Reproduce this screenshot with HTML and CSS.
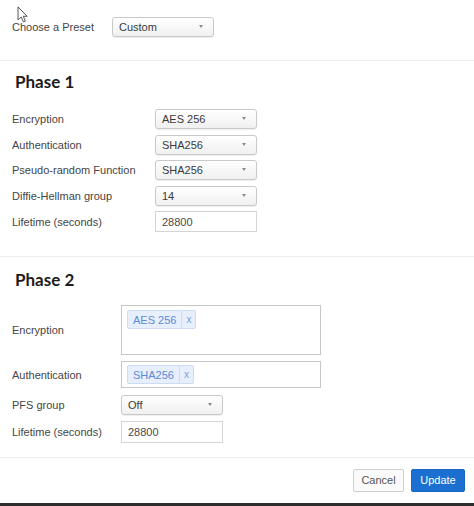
FILE: index.html
```html
<!DOCTYPE html>
<html>
<head>
<meta charset="utf-8">
<link rel="stylesheet" href="styles.css">
</head>
<body>
<div class="page">
  <div class="preset">
    <span class="label">Choose a Preset</span>
    <div class="select sel-preset"><span>Custom</span><i class="arrow"></i></div>
  </div>
  <div class="divider d1"></div>

  <section class="phase">
    <h2 class="title t1">Phase 1</h2>
    <div class="form form1">
      <span class="label">Encryption</span>
      <div class="select"><span>AES 256</span><i class="arrow"></i></div>
      <span class="label">Authentication</span>
      <div class="select"><span>SHA256</span><i class="arrow"></i></div>
      <span class="label">Pseudo-random Function</span>
      <div class="select"><span>SHA256</span><i class="arrow"></i></div>
      <span class="label">Diffie-Hellman group</span>
      <div class="select"><span>14</span><i class="arrow"></i></div>
      <span class="label">Lifetime (seconds)</span>
      <div class="input">28800</div>
    </div>
  </section>
  <div class="divider d2"></div>

  <section class="phase">
    <h2 class="title t2">Phase 2</h2>
    <div class="form form2">
      <span class="label">Encryption</span>
      <div class="multi tall"><span class="tag"><span class="tag-text">AES 256</span><span class="tag-x">x</span></span></div>
      <span class="label">Authentication</span>
      <div class="multi short"><span class="tag"><span class="tag-text">SHA256</span><span class="tag-x">x</span></span></div>
      <span class="label">PFS group</span>
      <div class="select"><span>Off</span><i class="arrow"></i></div>
      <span class="label">Lifetime (seconds)</span>
      <div class="input">28800</div>
    </div>
  </section>
  <div class="divider d3"></div>

  <div class="footer">
    <button class="btn btn-cancel">Cancel</button>
    <button class="btn btn-update">Update</button>
  </div>
  <div class="bottom-bar"></div>

  <svg class="cursor" width="11" height="17" viewBox="0 0 12 19">
    <path d="M1 1 L1 15.5 L4.6 12.3 L7 17.8 L9.2 16.9 L6.9 11.5 L11.2 11.5 Z" fill="#fff" stroke="#444" stroke-width="1" stroke-linejoin="round"/>
  </svg>
</div>
</body>
</html>
```

FILE: styles.css
```css
* { box-sizing: border-box; }
html, body { margin: 0; padding: 0; background: #fff; }
body {
  font-family: "Liberation Sans", Arial, sans-serif;
  font-size: 11px;
  color: #3b3b3b;
}
.page {
  position: relative;
  width: 474px;
  height: 506px;
  overflow: hidden;
}
.label { color: #454545; white-space: nowrap; }

.preset {
  display: grid;
  grid-template-columns: 100px 102px;
  align-items: center;
  padding: 17px 0 0 12px;
}
.select {
  height: 20px;
  border: 1px solid #c9c9c9;
  border-radius: 3px;
  background: linear-gradient(#ffffff, #f0f0f0);
  box-shadow: 0 1px 1px rgba(0,0,0,0.07);
  display: flex;
  align-items: center;
  justify-content: space-between;
  padding: 0 10px 0 6px;
  color: #3a3a3a;
}
.arrow {
  width: 0; height: 0;
  border-left: 2.5px solid transparent;
  border-right: 2.5px solid transparent;
  border-top: 3.5px solid #8a8a8a;
  margin-top: -1px;
}
.input {
  height: 21px;
  border: 1px solid #d4d4d4;
  background: #fff;
  display: flex;
  align-items: center;
  padding: 0 6px;
  color: #4a4a4a;
}
.divider { height: 1px; background: #ededed; }
.d1 { margin-top: 23px; }
.d2 { margin-top: 24px; }
.d3 { margin-top: 14px; }

.title {
  margin: 0;
  padding-left: 15px;
  font-family: Lato, "Liberation Sans", sans-serif;
  font-weight: 700;
  font-size: 17px;
  line-height: 20px;
  color: #1c1c1c;
}
.t1 { margin-top: 11px; margin-bottom: 17px; }
.t2 { margin-top: 13px; margin-bottom: 15px; }

.form {
  display: grid;
  align-items: center;
  padding-left: 12px;
}
.form1 {
  grid-template-columns: 143px 102px;
  row-gap: 5.5px;
}
.form2 {
  grid-template-columns: 109px auto;
  grid-template-rows: 50px 27px 20px 22px;
  row-gap: 6.3px;
  justify-items: start;
}
.form2 .select, .form2 .input { width: 102px; }
.form2 .input { height: 22px; }

.multi {
  width: 200px;
  border: 1px solid #c6c6c6;
  background: #fff;
  padding: 4px 5px;
  display: flex;
  align-items: flex-start;
}
.tall { height: 50px; }
.short { height: 27px; padding-top: 3px; }
.tag {
  display: inline-flex;
  height: 19px;
  align-items: stretch;
  background: #e7effc;
  border: 1px solid #cddcf3;
  border-radius: 2px;
  color: #5d8bd8;
  font-size: 11px;
}
.tag-text { display: flex; align-items: center; padding: 0 5px 0 5px; }
.tag-x {
  display: flex; align-items: center;
  padding: 0 4px;
  border-left: 1px solid #cddcf3;
  font-size: 10px;
  color: #7a9ddc;
}

.footer {
  display: flex;
  justify-content: flex-end;
  gap: 7px;
  padding: 11px 9px 0 0;
}
.btn {
  height: 23px;
  font-family: "Liberation Sans", Arial, sans-serif;
  font-size: 11px;
  border-radius: 2px;
  padding: 0;
  cursor: default;
}
.btn-cancel {
  width: 51px;
  background: #fafafa;
  border: 1px solid #cfcfcf;
  color: #555;
}
.btn-update {
  width: 54px;
  background: #1b6fd0;
  border: 1px solid #1866c4;
  color: #fff;
}
.bottom-bar {
  position: absolute;
  left: 0; right: 0; bottom: 0;
  height: 3px;
  background: #2c2c2c;
}
.cursor {
  position: absolute;
  left: 17px;
  top: 6px;
}
```
